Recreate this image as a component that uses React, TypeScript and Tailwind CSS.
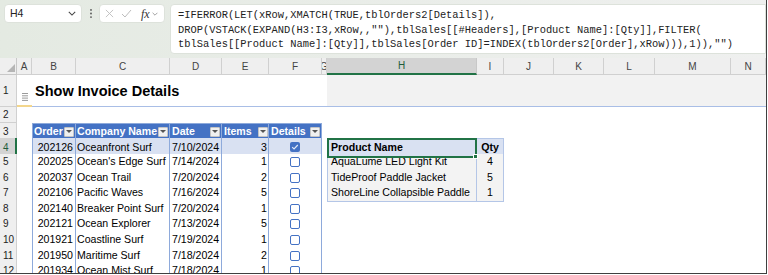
import React from 'react'

// column template: row header, A..N
const COLS =
  'grid grid-cols-[17px_15px_44px_94px_52px_47px_53px_5px_150px_27px_50px_50px_51px_76px_1fr]'

const LETTERS = ['A', 'B', 'C', 'D', 'E', 'F', 'G', 'H', 'I', 'J', 'K', 'L', 'M', 'N']

const orders = [
  { id: 202126, company: 'Oceanfront Surf', date: '7/10/2024', items: 3, checked: true },
  { id: 202025, company: "Ocean's Edge Surf", date: '7/14/2024', items: 1, checked: false },
  { id: 202037, company: 'Ocean Trail', date: '7/20/2024', items: 2, checked: false },
  { id: 202106, company: 'Pacific Waves', date: '7/16/2024', items: 5, checked: false },
  { id: 202140, company: 'Breaker Point Surf', date: '7/20/2024', items: 1, checked: false },
  { id: 202121, company: 'Ocean Explorer', date: '7/13/2024', items: 5, checked: false },
  { id: 201921, company: 'Coastline Surf', date: '7/19/2024', items: 1, checked: false },
  { id: 201950, company: 'Maritime Surf', date: '7/18/2024', items: 2, checked: false },
  { id: 201934, company: 'Ocean Mist Surf', date: '7/18/2024', items: 1, checked: false },
]

// rows 4..12 heights
const rowHeights = ['h-[16px]', 'h-[16px]', 'h-[15px]', 'h-[16px]', 'h-[15px]', 'h-[16px]', 'h-[16px]', 'h-[15px]', 'h-[16px]']

const details = [
  { name: 'AquaLume LED Light Kit', qty: 4 },
  { name: 'TideProof Paddle Jacket', qty: 5 },
  { name: 'ShoreLine Collapsible Paddle', qty: 1 },
]

const Chevron = ({ className }: { className?: string }) => (
  <svg viewBox="0 0 10 6" className={className} fill="none" stroke="currentColor" strokeWidth="1.3">
    <path d="M1 1l4 4 4-4" />
  </svg>
)

const FormulaBar = () => (
  <div className="h-[58px] flex items-start pt-[4px] pl-[4px] bg-linear-to-r from-[#e4eae2] to-[#eff0ef]">
    <div className="w-[78px] h-[19px] bg-white rounded-[4px] border border-[#dde2db] flex items-center justify-between pl-[5px] pr-[5px] text-[10.5px] text-[#222]">
      <span>H4</span>
      <Chevron className="w-[8px] h-[5px] text-[#444]" />
    </div>
    <div className="w-[17px] h-[19px] flex items-center justify-center">
      <svg viewBox="0 0 2 10" className="w-[2px] h-[9px] text-[#555]" fill="currentColor">
        <circle cx="1" cy="1" r="1" />
        <circle cx="1" cy="5" r="1" />
        <circle cx="1" cy="9" r="1" />
      </svg>
    </div>
    <div className="w-[66px] h-[19px] bg-white rounded-[4px] border border-[#dde2db] flex items-center pl-[5px] gap-[7px] text-[#bdbdbd]">
      <svg viewBox="0 0 10 10" className="w-[9px] h-[9px]" fill="none" stroke="currentColor" strokeWidth="1">
        <path d="M1 1l8 8M9 1l-8 8" />
      </svg>
      <svg viewBox="0 0 11 9" className="w-[11px] h-[9px]" fill="none" stroke="currentColor" strokeWidth="1">
        <path d="M1 5l3 3 6-7" />
      </svg>
      <span className="font-['Liberation_Serif',serif] italic text-[12px] text-[#333] leading-none ml-[2px]">fx</span>
      <Chevron className="w-[6px] h-[4px] text-[#888] -ml-[5px]" />
    </div>
    <div className="flex-1 ml-[5px] h-[50px] bg-white rounded-l-[4px] border border-[#dde2db] pl-[7px] pt-[3px] font-['Liberation_Mono',monospace] text-[10.4px] leading-[14.5px] text-[#222] whitespace-pre overflow-hidden">
      <div>=IFERROR(LET(xRow,XMATCH(TRUE,tblOrders2[Details]),</div>
      <div>DROP(VSTACK(EXPAND(H3:I3,xRow,,""),tblSales[[#Headers],[Product Name]:[Qty]],FILTER(</div>
      <div>tblSales[[Product Name]:[Qty]],tblSales[Order ID]=INDEX(tblOrders2[Order],xRow))),1)),"")</div>
    </div>
  </div>
)

const ColumnHeaders = () => (
  <div className={`${COLS} h-[17px] bg-[#efefef] text-[10px] text-[#444]`}>
    <div className="border-r border-b border-[#c8c8c8] flex items-end justify-end pr-[1px] pb-[2px]">
      <svg viewBox="0 0 8 8" className="w-[8px] h-[8px]" fill="#b5b5b5">
        <polygon points="8,0 8,8 0,8" />
      </svg>
    </div>
    {LETTERS.map((l) =>
      l === 'H' ? (
        <div key={l} className="bg-[#d3d3d3] border-r border-[#c8c8c8] border-b-2 border-b-[#217346] flex items-center justify-center text-[#1f5c3a]">
          {l}
        </div>
      ) : (
        <div key={l} className="border-r border-b border-[#d0d0d0] flex items-center justify-center overflow-hidden">
          {l}
        </div>
      )
    )}
  </div>
)

const RowHead = ({ n, selected }: { n: number; selected?: boolean }) =>
  selected ? (
    <div className="bg-[#d3d3d3] border-b border-[#c8c8c8] border-r-2 border-r-[#217346] flex items-center pl-[3px] text-[10px] text-[#1f5c3a]">
      {n}
    </div>
  ) : (
    <div className="bg-[#efefef] border-b border-r border-[#d0d0d0] flex items-center pl-[3px] text-[10px] text-[#222]">
      {n}
    </div>
  )

const Dropdown = () => (
  <div className="w-[10px] h-[10px] shrink-0 bg-[#f0f0f0] border border-[#c4c4c4] rounded-[1px] flex items-center justify-center">
    <div className="w-0 h-0 border-l-[3px] border-r-[3px] border-t-[3px] border-l-transparent border-r-transparent border-t-[#555]" />
  </div>
)

const Checkbox = ({ checked }: { checked: boolean }) =>
  checked ? (
    <div className="w-[10px] h-[10px] rounded-[2px] bg-[#4472c4] flex items-center justify-center">
      <svg viewBox="0 0 10 10" className="w-[8px] h-[8px]" fill="none" stroke="#e4ebf7" strokeWidth="1.4">
        <path d="M1.5 5.2l2.3 2.3L8.5 2.5" />
      </svg>
    </div>
  ) : (
    <div className="w-[10px] h-[10px] rounded-[2px] bg-white border-[1.4px] border-[#4472c4]" />
  )

const Empty = ({ count }: { count: number }) => (
  <>
    {Array.from({ length: count }).map((_, i) => (
      <div key={i} />
    ))}
  </>
)

export default function App() {
  const tblBorder = 'border-r border-b border-[#8eaadb]'
  const rightBorder = 'border-r border-b border-[#b4c6e7]'

  return (
    <div className="w-[768px] h-[275px] bg-white overflow-hidden">
      <div className="w-[767px] h-[274px] border-r border-b border-[#3f3f3f] overflow-hidden font-['Liberation_Sans',Arial,sans-serif] text-black text-[10.6px]">
        <FormulaBar />
        <ColumnHeaders />

        {/* row 1: title */}
        <div className={`${COLS} h-[32px]`}>
          <RowHead n={1} />
          <div className="border-b-2 border-[#f3d68c] flex items-end justify-center pb-[4px]">
            <svg viewBox="0 0 6 8" className="w-[6px] h-[8px]" fill="#9a9a9a">
              <rect x="0" y="0" width="6" height="1" />
              <rect x="0" y="2.3" width="6" height="1" />
              <rect x="0" y="4.6" width="6" height="1" />
              <rect x="0" y="6.9" width="6" height="1" />
            </svg>
          </div>
          <div className="col-span-6 border-b border-[#a9bee6] flex items-end pl-[3px] pb-[3px] text-[14.5px] font-bold whitespace-nowrap">
            Show Invoice Details
          </div>
          <div className="col-span-7 bg-[#f2f2f2] border-b border-[#a9bee6]" />
        </div>

        {/* row 2 */}
        <div className={`${COLS} h-[16px]`}>
          <RowHead n={2} />
          <Empty count={14} />
        </div>

        {/* row 3: table header */}
        <div className={`${COLS} h-[15px]`}>
          <RowHead n={3} />
          <div />
          <div className={`${tblBorder} border-t border-l bg-[#4472c4] text-white font-bold flex items-center justify-between pl-[1px] pr-[1px]`}>
            <span>Order</span>
            <Dropdown />
          </div>
          <div className={`${tblBorder} border-t bg-[#4472c4] text-white font-bold flex items-center justify-between pl-[1px] pr-[1px] whitespace-nowrap`}>
            <span>Company Name</span>
            <Dropdown />
          </div>
          <div className={`${tblBorder} border-t bg-[#4472c4] text-white font-bold flex items-center justify-between pl-[2px] pr-[1px]`}>
            <span>Date</span>
            <Dropdown />
          </div>
          <div className={`${tblBorder} border-t bg-[#4472c4] text-white font-bold flex items-center justify-between pl-[2px] pr-[0px]`}>
            <span>Items</span>
            <Dropdown />
          </div>
          <div className={`${tblBorder} border-t bg-[#4472c4] text-white font-bold flex items-center justify-between pl-[2px] pr-[1px]`}>
            <span>Details</span>
            <Dropdown />
          </div>
          <Empty count={8} />
        </div>

        {/* rows 4..12 */}
        {orders.map((o, i) => {
          const rowNum = i + 4
          const bg = i === 0 ? 'bg-[#d9e1f2]' : 'bg-white'
          const detail = rowNum >= 5 && rowNum <= 7 ? details[rowNum - 5] : null
          return (
            <div key={o.id} className={`${COLS} ${rowHeights[i]}`}>
              <RowHead n={rowNum} selected={rowNum === 4} />
              <div />
              <div className={`${tblBorder} border-l ${bg} flex items-center justify-end pr-[2px]`}>{o.id}</div>
              <div className={`${tblBorder} ${bg} flex items-center pl-[1px] whitespace-nowrap`}>{o.company}</div>
              <div className={`${tblBorder} ${bg} flex items-center pl-[2px]`}>{o.date}</div>
              <div className={`${tblBorder} ${bg} flex items-center justify-end pr-[1px]`}>{o.items}</div>
              <div className={`${tblBorder} ${bg} flex items-center justify-center`}>
                <Checkbox checked={o.checked} />
              </div>
              <div />
              {rowNum === 4 ? (
                <>
                  <div className="relative bg-[#d9e1f2] border-2 border-[#217346] flex items-center pl-[2px] font-bold">
                    Product Name
                    <div className="absolute -right-[3px] -bottom-[3px] w-[5px] h-[5px] bg-[#217346] border border-white" />
                  </div>
                  <div className={`${rightBorder} border-t bg-[#d9e1f2] flex items-center justify-center font-bold`}>Qty</div>
                </>
              ) : detail ? (
                <>
                  <div className={`${rightBorder} border-l bg-[#f3f3f3] flex items-center pl-[3px] whitespace-nowrap`}>
                    {detail.name}
                  </div>
                  <div className={`${rightBorder} bg-[#f3f3f3] flex items-center justify-center`}>{detail.qty}</div>
                </>
              ) : (
                <Empty count={2} />
              )}
              <Empty count={5} />
            </div>
          )
        })}
      </div>
    </div>
  )
}
